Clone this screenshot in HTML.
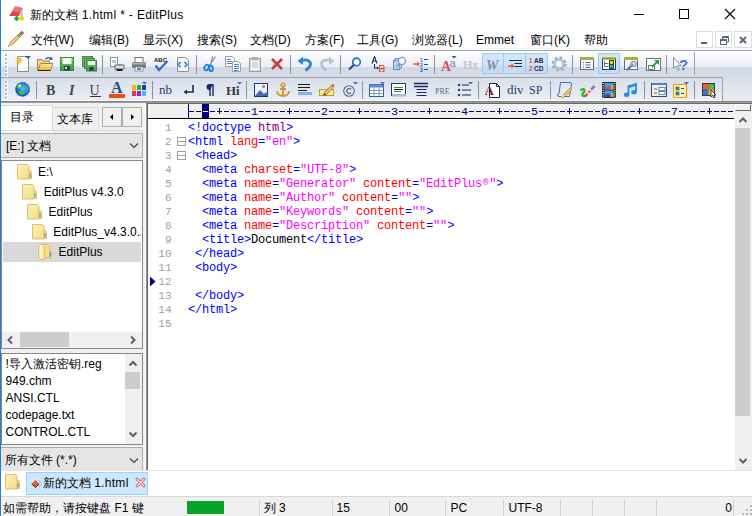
<!DOCTYPE html><html><head><meta charset="utf-8"><style>
*{margin:0;padding:0;box-sizing:border-box}
html,body{width:752px;height:516px;overflow:hidden;background:#fff}
body{position:relative;font-family:"Liberation Sans",sans-serif;font-size:12px;color:#000}
.t{position:absolute;white-space:nowrap;line-height:14px}
.b{position:absolute}
.code{position:absolute;font-family:"Liberation Mono",monospace;font-size:12px;letter-spacing:-0.2px;line-height:14px;white-space:pre;color:#0000ff}
.ln{position:absolute;font-family:"Liberation Mono",monospace;font-size:11px;letter-spacing:0.3px;line-height:14px;white-space:pre;color:#a0a0a0;text-align:right;width:40px}
.tg{color:#0000ff}.at{color:#ff0000}.av{color:#ff00ff}.dt{color:#800080}.tx{color:#000}
</style></head><body>
<div class="b" style="left:0;top:0;width:1px;height:516px;background:#1f7fd8;z-index:50"></div>
<svg style="position:absolute;left:4px;top:2px" width="24" height="24" viewBox="0 0 24 24"><path d="M5.1 14 L11.2 4.2 L18.6 6 L14.9 14 Z" fill="#e04848"/><path d="M11.2 4.2 L18.6 6 L16 10.5 L9 9Z" fill="#f08a88" opacity="0.7"/><path d="M18.6 6 L19.2 15 L14.9 14 Z" fill="#b8d0e6"/>
<path d="M10.2 16.5h4.8M12.6 14.1v4.8" stroke="#28a828" stroke-width="2.2"/><path d="M15.3 16.3h4.8M17.7 13.9v4.8" stroke="#f0d020" stroke-width="2.2"/></svg>
<div class="t " style="left:30px;top:8px;">新的文档<span style="letter-spacing:0.35px"> 1.html * - EditPlus</span></div>
<div class="b" style="left:634px;top:14px;width:10px;height:1px;background:#000"></div>
<div class="b" style="left:679px;top:9px;width:10px;height:10px;border:1px solid #000"></div>
<svg style="position:absolute;left:724px;top:8px" width="12" height="12" viewBox="0 0 12 12"><path d="M1 1L11 11M11 1L1 11" stroke="#000" stroke-width="1.1"/></svg>
<svg style="position:absolute;left:2px;top:28px" width="28" height="22" viewBox="0 0 28 22"><path d="M8 16.8L17.6 7.2" stroke="#a07a30" stroke-width="3.4"/><path d="M8 16.8L17.6 7.2" stroke="#f6dc70" stroke-width="2"/><path d="M6.3 18.5L7.3 15.3L9.5 17.5Z" fill="#f0c896"/><path d="M6.3 18.5l0.45-1.5l1.05 1.05z" fill="#222"/><path d="M16.6 8.2L18.8 6" stroke="#2a8a3a" stroke-width="3.2"/><path d="M17.4 7.4L18 6.8" stroke="#e8f0e8" stroke-width="3"/><path d="M18.8 6L21 3.8" stroke="#d84a4a" stroke-width="3.2"/></svg>
<div class="t " style="left:30.6px;top:33px;">文件(W)</div>
<div class="t " style="left:89px;top:33px;">编辑(B)</div>
<div class="t " style="left:143px;top:33px;">显示(X)</div>
<div class="t " style="left:197px;top:33px;">搜索(S)</div>
<div class="t " style="left:250px;top:33px;">文档(D)</div>
<div class="t " style="left:305px;top:33px;">方案(F)</div>
<div class="t " style="left:357px;top:33px;">工具(G)</div>
<div class="t " style="left:412px;top:33px;">浏览器(L)</div>
<div class="t " style="left:476px;top:33px;">Emmet</div>
<div class="t " style="left:530px;top:33px;">窗口(K)</div>
<div class="t " style="left:584px;top:33px;">帮助</div>
<div class="b" style="left:696px;top:31px;width:17px;height:17px;border:1px solid #dcdcdc;background:#fff"></div>
<div class="b" style="left:715px;top:31px;width:17px;height:17px;border:1px solid #dcdcdc;background:#fff"></div>
<div class="b" style="left:734px;top:31px;width:18px;height:17px;border:1px solid #dcdcdc;background:#fff"></div>
<div class="b" style="left:701px;top:42px;width:6px;height:2px;background:#5a6478"></div>
<svg style="position:absolute;left:718px;top:34px" width="12" height="12" viewBox="0 0 12 12"><rect x="2.5" y="5.5" width="6" height="5" fill="none" stroke="#5a6478"/><path d="M2 6.5h7" stroke="#5a6478"/><path d="M4.5 5V2.5H10.5V8H9" fill="none" stroke="#5a6478"/><path d="M4.5 3.5h6" stroke="#5a6478"/></svg>
<svg style="position:absolute;left:737px;top:34px" width="12" height="12" viewBox="0 0 12 12"><path d="M3 3L9 9M9 3L3 9" stroke="#5a6478" stroke-width="1.8"/></svg>
<div class="b" style="left:0;top:48px;width:752px;height:1px;background:#f0f0f0"></div>
<div class="b" style="left:0;top:50px;width:752px;height:1px;background:#a0a0a0"></div>
<div class="b" style="left:0;top:51px;width:752px;height:50px;background:linear-gradient(#fdfdfe 0%,#e9edf5 31.6%,#cfd8e7 32%,#e8ecf4 100%)"></div>
<div class="b" style="left:0;top:51px;width:722px;height:26px;background:linear-gradient(#fdfdfe 0%,#eaeef5 61%,#d0d8e6 61.6%,#dae0ec 100%)"></div>
<div class="b" style="left:0;top:77px;width:722px;height:1px;background:#a0a0a0"></div>
<div class="b" style="left:0;top:78px;width:722px;height:23px;background:linear-gradient(#d8dfea 0%,#ebeef5 100%)"></div>
<div class="b" style="left:722px;top:77px;width:1px;height:24px;background:#a0a0a0"></div>
<div class="b" style="left:0;top:100px;width:722px;height:1px;background:#fafbfd"></div>
<div class="b" style="left:0;top:101px;width:752px;height:2px;background:linear-gradient(#7a7a7a,#a5a5a5)"></div>
<div class="b" style="left:694px;top:52px;width:1px;height:23px;background:#a0a0a0"></div>
<div class="b" style="left:5px;top:54px;width:2px;height:2px;background:#b4bac4;border-right:1px solid #fff;border-bottom:1px solid #fff;width:3px;height:3px"></div>
<div class="b" style="left:5px;top:58px;width:2px;height:2px;background:#b4bac4;border-right:1px solid #fff;border-bottom:1px solid #fff;width:3px;height:3px"></div>
<div class="b" style="left:5px;top:62px;width:2px;height:2px;background:#b4bac4;border-right:1px solid #fff;border-bottom:1px solid #fff;width:3px;height:3px"></div>
<div class="b" style="left:5px;top:66px;width:2px;height:2px;background:#b4bac4;border-right:1px solid #fff;border-bottom:1px solid #fff;width:3px;height:3px"></div>
<div class="b" style="left:5px;top:70px;width:2px;height:2px;background:#b4bac4;border-right:1px solid #fff;border-bottom:1px solid #fff;width:3px;height:3px"></div>
<div class="b" style="left:5px;top:74px;width:2px;height:2px;background:#b4bac4;border-right:1px solid #fff;border-bottom:1px solid #fff;width:3px;height:3px"></div>
<div class="b" style="left:5px;top:81px;width:2px;height:2px;background:#b4bac4;border-right:1px solid #fff;border-bottom:1px solid #fff;width:3px;height:3px"></div>
<div class="b" style="left:5px;top:85px;width:2px;height:2px;background:#b4bac4;border-right:1px solid #fff;border-bottom:1px solid #fff;width:3px;height:3px"></div>
<div class="b" style="left:5px;top:89px;width:2px;height:2px;background:#b4bac4;border-right:1px solid #fff;border-bottom:1px solid #fff;width:3px;height:3px"></div>
<div class="b" style="left:5px;top:93px;width:2px;height:2px;background:#b4bac4;border-right:1px solid #fff;border-bottom:1px solid #fff;width:3px;height:3px"></div>
<div class="b" style="left:5px;top:97px;width:2px;height:2px;background:#b4bac4;border-right:1px solid #fff;border-bottom:1px solid #fff;width:3px;height:3px"></div>
<div class="b" style="left:102px;top:55px;width:1px;height:19px;background:#8e9299"></div>
<div class="b" style="left:196px;top:55px;width:1px;height:19px;background:#8e9299"></div>
<div class="b" style="left:290px;top:55px;width:1px;height:19px;background:#8e9299"></div>
<div class="b" style="left:340px;top:55px;width:1px;height:19px;background:#8e9299"></div>
<div class="b" style="left:434px;top:55px;width:1px;height:19px;background:#8e9299"></div>
<div class="b" style="left:572px;top:55px;width:1px;height:19px;background:#8e9299"></div>
<div class="b" style="left:666px;top:55px;width:1px;height:19px;background:#8e9299"></div>
<div class="b" style="left:36px;top:81px;width:1px;height:18px;background:#8e9299"></div>
<div class="b" style="left:152px;top:81px;width:1px;height:18px;background:#8e9299"></div>
<div class="b" style="left:246px;top:81px;width:1px;height:18px;background:#8e9299"></div>
<div class="b" style="left:362px;top:81px;width:1px;height:18px;background:#8e9299"></div>
<div class="b" style="left:478px;top:81px;width:1px;height:18px;background:#8e9299"></div>
<div class="b" style="left:550px;top:81px;width:1px;height:18px;background:#8e9299"></div>
<div class="b" style="left:644px;top:81px;width:1px;height:18px;background:#8e9299"></div>
<div class="b" style="left:694px;top:81px;width:1px;height:18px;background:#8e9299"></div>
<div class="b" style="left:482px;top:53px;width:66px;height:21px;background:linear-gradient(#d3e7f9 0%,#cfe3f8 60%,#c3daf2 61%,#c6dcf3 100%);border:1px solid #9ccaf2"></div>
<div class="b" style="left:503px;top:53px;width:1px;height:21px;background:#9ccaf2"></div>
<div class="b" style="left:525px;top:53px;width:1px;height:21px;background:#9ccaf2"></div>
<div class="b" style="left:598px;top:53px;width:22px;height:21px;background:linear-gradient(#d3e7f9 0%,#cfe3f8 60%,#c3daf2 61%,#c6dcf3 100%);border:1px solid #9ccaf2"></div>
<svg style="position:absolute;left:15px;top:56px" width="16" height="16" viewBox="0 0 16 16"><path d="M2.5 0.5h9l2 2v13h-11z" fill="#fbfbf8" stroke="#8a8a8a"/><circle cx="4" cy="4.5" r="2.4" fill="#f7a010"/><path d="M4 0.5v8M0 4.5h8M1.3 1.8l5.4 5.4M6.7 1.8l-5.4 5.4" stroke="#f9c850" stroke-width="0.9"/><path d="M10 0h6l-3 3z" fill="#3a5a90"/></svg>
<svg style="position:absolute;left:37px;top:56px" width="16" height="16" viewBox="0 0 16 16"><defs><linearGradient id="of" x1="0" y1="0" x2="0" y2="1"><stop offset="0" stop-color="#fdf0a0"/><stop offset="1" stop-color="#e8b030"/></linearGradient></defs><path d="M0.5 3.5h4.5l1 1.5h6.5v9.5H0.5z" fill="#f4d878" stroke="#8a7040" stroke-width="0.8"/><path d="M1 14.5L3.5 7.5h12.5l-2.5 7z" fill="url(#of)" stroke="#8a7040" stroke-width="0.8"/><path d="M1 14.5h12.5" stroke="#302010" stroke-width="1"/><path d="M8.5 3.5C10 1 13 1 14 3.5" fill="none" stroke="#2a5aa0" stroke-width="1.3"/><path d="M12 4l4-0.5l-2-3z" fill="#2a5aa0"/></svg>
<svg style="position:absolute;left:59px;top:56px" width="16" height="16" viewBox="0 0 16 16"><defs><linearGradient id="sv" x1="0" y1="0" x2="0" y2="1"><stop offset="0" stop-color="#7ac87a"/><stop offset="1" stop-color="#3c9a3c"/></linearGradient></defs><rect x="1.5" y="1.5" width="13" height="13" fill="url(#sv)" stroke="#3a8a3a"/><rect x="3.5" y="2" width="9" height="6" fill="#f0f8f0"/><rect x="5" y="10" width="6" height="4.5" fill="#2a3a50"/><rect x="6" y="11" width="2" height="2" fill="#e0e0e0"/></svg>
<svg style="position:absolute;left:81px;top:56px" width="16" height="16" viewBox="0 0 16 16"><rect x="1.5" y="0.5" width="10" height="10" fill="#6ab86a" stroke="#3a8a3a"/><rect x="3.5" y="2.5" width="10" height="10" fill="#6ab86a" stroke="#3a8a3a"/><rect x="5.5" y="4.5" width="10" height="10.5" fill="url(#sv)" stroke="#3a8a3a"/><rect x="7" y="5" width="7" height="4" fill="#f0f8f0"/><rect x="8.5" y="11" width="4" height="3.5" fill="#2a3a50"/></svg>
<svg style="position:absolute;left:109px;top:56px" width="16" height="16" viewBox="0 0 16 16"><rect x="1.5" y="1.5" width="7" height="9" fill="#fff" stroke="#909090"/><rect x="3" y="4" width="4" height="3" fill="#a8c8e8"/><rect x="6" y="9" width="9" height="4" fill="#e0e0e0" stroke="#505050" stroke-width="0.8"/><rect x="7.5" y="13" width="6" height="2" fill="#202020"/><rect x="8" y="8" width="5" height="1.5" fill="#909090"/></svg>
<svg style="position:absolute;left:131px;top:56px" width="16" height="16" viewBox="0 0 16 16"><rect x="4" y="1.5" width="8" height="5" fill="#fff" stroke="#707070"/><rect x="1" y="6" width="14" height="6" rx="1" fill="#7a7a7a"/><rect x="1.5" y="6.5" width="13" height="2" fill="#b0b0b0"/><rect x="4" y="11" width="8" height="4" fill="#fff" stroke="#707070" stroke-width="0.7"/><rect x="6" y="12" width="4" height="2" fill="#3a8ad0"/><circle cx="13" cy="8" r="0.8" fill="#40c040"/></svg>
<svg style="position:absolute;left:153px;top:56px" width="16" height="16" viewBox="0 0 16 16"><text x="1" y="6" font-family="Liberation Sans" font-size="6" font-weight="bold" fill="#222">ABC</text><path d="M2.5 9.5l3.5 4.5l8.5-9" fill="none" stroke="#3a6ad0" stroke-width="2.4"/></svg>
<svg style="position:absolute;left:175px;top:56px" width="16" height="16" viewBox="0 0 16 16"><path d="M2.5 1.5h8l3 3v11h-11z" fill="#f6f6f6" stroke="#909090"/><path d="M5.5 6l-2.5 2.5l2.5 2.5M9.5 6l2.5 2.5l-2.5 2.5" fill="none" stroke="#4a90e0" stroke-width="1.8"/></svg>
<svg style="position:absolute;left:202px;top:56px" width="16" height="16" viewBox="0 0 16 16"><path d="M7.5 9.5L13.5 0.5M8.5 9.5L10.5 0.5" stroke="#7a8290" stroke-width="1.1"/><ellipse cx="4.5" cy="11.5" rx="2" ry="3" transform="rotate(25 4.5 11.5)" fill="none" stroke="#1a7ae0" stroke-width="1.8"/><ellipse cx="9" cy="12.5" rx="1.8" ry="2.8" transform="rotate(-5 9 12.5)" fill="none" stroke="#1a7ae0" stroke-width="1.8"/></svg>
<svg style="position:absolute;left:225px;top:56px" width="16" height="16" viewBox="0 0 16 16"><path d="M0.5 0.5h7l2 2v8h-9z" fill="#fafafa" stroke="#a0a0a0"/><path d="M7.5 5.5h6l2 2v8h-8z" fill="#fafafa" stroke="#a0a0a0"/><path d="M2 3.5h4M2 5.5h5M2 7.5h5M9 8.5h5M9 10.5h5M9 12.5h5M9 14.5h4" stroke="#4a82c8" stroke-width="1"/></svg>
<svg style="position:absolute;left:247px;top:56px" width="16" height="16" viewBox="0 0 16 16"><rect x="2.5" y="2.5" width="11" height="13" fill="#dcdcdc" stroke="#9a9a9a"/><rect x="5" y="1" width="6" height="3" fill="#b0b0b0"/><rect x="4" y="5" width="8" height="9" fill="#f2f2f2"/><path d="M5 7h6M5 9h6M5 11h6" stroke="#c0c0c0"/></svg>
<svg style="position:absolute;left:269px;top:56px" width="16" height="16" viewBox="0 0 16 16"><path d="M3 3L13 13M13 3L3 13" stroke="#d23a3a" stroke-width="2.6"/></svg>
<svg style="position:absolute;left:297px;top:56px" width="16" height="16" viewBox="0 0 16 16"><path d="M4.5 4.5C9 3 14 4.5 13.5 8.5C13 11.5 10.5 13 8.5 14.5" fill="none" stroke="#2a86d8" stroke-width="2.8"/><path d="M0.5 5L6 0.5V9z" fill="#2a86d8"/></svg>
<svg style="position:absolute;left:319px;top:56px" width="16" height="16" viewBox="0 0 16 16"><path d="M11.5 4.5C7 3 2 4.5 2.5 8.5C3 11.5 5.5 13 7.5 14.5" fill="none" stroke="#b4c4d2" stroke-width="2.8"/><path d="M15.5 5L10 0.5V9z" fill="#b4c4d2"/></svg>
<svg style="position:absolute;left:347px;top:56px" width="16" height="16" viewBox="0 0 16 16"><circle cx="9.5" cy="6" r="3.8" fill="#fff" stroke="#2a72c8" stroke-width="1.7"/><path d="M7 8.8L2 13.5" stroke="#1a4a90" stroke-width="2.2"/></svg>
<svg style="position:absolute;left:369px;top:56px" width="16" height="16" viewBox="0 0 16 16"><path d="M3 7.5L5.5 0.5L8 7.5M3.8 5h3.4" fill="none" stroke="#1a2a60" stroke-width="1.1"/><path d="M5.5 8v4h3" fill="none" stroke="#1a2a60" stroke-width="1.1"/><path d="M8 10.5l2 1.5l-2 1.5z" fill="#1a2a60"/><path d="M10.5 9.5h3a1.6 1.6 0 0 1 0 3.2h-3zM10.5 12.7h3.3a1.7 1.7 0 0 1 0 3.3h-3.3zM10.5 9.5v6.5" fill="none" stroke="#f05020" stroke-width="1.2"/></svg>
<svg style="position:absolute;left:391px;top:56px" width="16" height="16" viewBox="0 0 16 16"><path d="M2.5 4.5l2-2h6v9l-2 2h-6z" fill="#b8d4f0" stroke="#5a88c0"/><path d="M2.5 4.5h6v9M8.5 4.5l2-2" fill="none" stroke="#5a88c0" stroke-width="0.8"/><circle cx="11" cy="5" r="3.6" fill="#eef6ff" stroke="#8a9cb0" stroke-width="1.3"/><path d="M8.5 7.5L5 11" stroke="#8a9cb0" stroke-width="1.6"/></svg>
<svg style="position:absolute;left:413px;top:56px" width="16" height="16" viewBox="0 0 16 16"><path d="M0 8h5" stroke="#f05a20" stroke-width="1.5"/><path d="M4 5.5l3 2.5l-3 2.5z" fill="#f05a20"/><text x="7" y="5.5" font-family="Liberation Sans" font-size="5" font-weight="bold" fill="#2a5ac0">1</text><text x="7" y="10.5" font-family="Liberation Sans" font-size="5" font-weight="bold" fill="#2a5ac0">2</text><text x="7" y="15.5" font-family="Liberation Sans" font-size="5" font-weight="bold" fill="#2a5ac0">3</text><path d="M11 3.5h4M11 8.5h4M11 13.5h4" stroke="#2a4a80" stroke-width="1.2"/></svg>
<svg style="position:absolute;left:441px;top:56px" width="16" height="16" viewBox="0 0 16 16"><text x="0" y="15" font-family="Liberation Serif" font-size="14" font-weight="bold" fill="#d85050">A</text><text x="8.5" y="11" font-family="Liberation Sans" font-size="11" fill="#7a78d0">a</text><path d="M10.5 0h5l-2.5 2.5z" fill="#3a5a8a"/></svg>
<svg style="position:absolute;left:463px;top:56px" width="16" height="16" viewBox="0 0 16 16"><text x="0" y="13" font-family="Liberation Serif" font-size="12" font-weight="bold" fill="#c0c4cc">Hx</text></svg>
<svg style="position:absolute;left:485px;top:56px" width="16" height="16" viewBox="0 0 16 16"><text x="1" y="14" font-family="Liberation Serif" font-size="14" font-style="italic" font-weight="bold" fill="#8090a8">W</text></svg>
<svg style="position:absolute;left:507px;top:56px" width="16" height="16" viewBox="0 0 16 16"><path d="M2 4.5h13M7.5 7.5h7.5M7.5 10.5h7.5" stroke="#1a2a50" stroke-width="1.2"/><path d="M1 10h4" stroke="#f05020" stroke-width="1.5"/><path d="M4.5 7.5l3 2.5l-3 2.5z" fill="#f05020"/></svg>
<svg style="position:absolute;left:529px;top:56px" width="16" height="16" viewBox="0 0 16 16"><text x="0" y="7" font-family="Liberation Sans" font-size="6.5" font-weight="bold" fill="#f05020">1</text><text x="0" y="15" font-family="Liberation Sans" font-size="6.5" font-weight="bold" fill="#f05020">2</text><text x="5" y="7" font-family="Liberation Sans" font-size="6.5" font-weight="bold" fill="#1a2a50">AB</text><text x="5" y="15" font-family="Liberation Sans" font-size="6.5" font-weight="bold" fill="#1a2a50">CD</text></svg>
<svg style="position:absolute;left:551px;top:56px" width="16" height="16" viewBox="0 0 16 16"><circle cx="8" cy="8" r="6" fill="none" stroke="#98acc2" stroke-width="3" stroke-dasharray="2.4 2.3"/><circle cx="8" cy="8" r="4.6" fill="none" stroke="#a8bcd0" stroke-width="2.4"/><circle cx="8" cy="8" r="2.2" fill="#f4f6fa"/></svg>
<svg style="position:absolute;left:579px;top:56px" width="16" height="16" viewBox="0 0 16 16"><rect x="1.5" y="1.5" width="13" height="12" fill="#f4f6fa" stroke="#5a6a88"/><rect x="1" y="1" width="14" height="3" fill="#a8b040"/><path d="M4 6.5h1M4 9h1M4 11.5h1" stroke="#e05020" stroke-width="1.2"/><path d="M6.5 6.5h5M6.5 9h5M6.5 11.5h5" stroke="#5a6a88"/></svg>
<svg style="position:absolute;left:601px;top:56px" width="16" height="16" viewBox="0 0 16 16"><defs><linearGradient id="ol" x1="0" y1="0" x2="0" y2="1"><stop offset="0" stop-color="#c8d040"/><stop offset="1" stop-color="#707818"/></linearGradient></defs><rect x="1.5" y="1.5" width="13" height="12" fill="#fafafa" stroke="#2a3a58"/><rect x="1" y="1" width="14" height="2.5" fill="url(#ol)"/><path d="M3.5 5v5.5h4M3.5 7.5h4" fill="none" stroke="#707070"/><rect x="8" y="4" width="5" height="9" fill="#2a3a58"/><rect x="9" y="5" width="3" height="3" fill="#f0d010"/><rect x="9" y="9" width="3" height="3" fill="#30c040"/></svg>
<svg style="position:absolute;left:623px;top:56px" width="16" height="16" viewBox="0 0 16 16"><rect x="1.5" y="1.5" width="13" height="12" fill="#f4f6fa" stroke="#5a6a88"/><rect x="1" y="1" width="14" height="3" fill="#a8b040"/><path d="M4 14L10 8" stroke="#5a88c8" stroke-width="2.5"/><circle cx="10.5" cy="8" r="2.5" fill="none" stroke="#9aa0b0" stroke-width="1.5"/></svg>
<svg style="position:absolute;left:645px;top:56px" width="16" height="16" viewBox="0 0 16 16"><rect x="1.5" y="2.5" width="14" height="12" fill="#fbfbfb" stroke="#707070"/><path d="M3.5 9.5h6v4h-6z" fill="none" stroke="#707070"/><path d="M7 11l6-6" stroke="#20a040" stroke-width="1.8"/><path d="M9 4h5v5z" fill="#20a040"/></svg>
<svg style="position:absolute;left:672px;top:56px" width="16" height="16" viewBox="0 0 16 16"><path d="M1.5 1.5v11l2.5-2.5l2 4.5l1.5-.7l-2-4.3h3.5z" fill="#f8f8f8" stroke="#8a96a8"/><text x="7" y="13.5" font-family="Liberation Sans" font-size="15" font-weight="bold" fill="#4a78d0">?</text></svg>
<svg style="position:absolute;left:15px;top:82px" width="16" height="16" viewBox="0 0 16 16"><defs><radialGradient id="gg" cx="0.55" cy="0.45" r="0.6"><stop offset="0" stop-color="#4ac4f8"/><stop offset="0.6" stop-color="#2a78e0"/><stop offset="1" stop-color="#1838b0"/></radialGradient></defs><circle cx="7.6" cy="7.4" r="7.3" fill="url(#gg)"/><path d="M1.5 5.5C2 3 4 1.5 6.5 1.8C7 3.5 6 5.5 4 6.5C3 6.8 2 6.5 1.5 5.5z" fill="#30c838"/><path d="M10.8 3.2C12.5 4 13.5 6 13 8.5C11.5 8.5 10.5 7 10.8 3.2z" fill="#30c838"/><path d="M3.5 10C5 8.8 8 9 9.5 10.5C9.5 12 8 13 6.5 13C5 12.5 3.8 11.5 3.5 10z" fill="#30c838"/><circle cx="4.8" cy="4" r="1.3" fill="#f0fff0" opacity="0.9"/></svg>
<svg style="position:absolute;left:44px;top:82px" width="16" height="16" viewBox="0 0 16 16"><text x="2" y="13" font-family="Liberation Serif" font-size="14" font-weight="bold" fill="#444">B</text></svg>
<svg style="position:absolute;left:66px;top:82px" width="16" height="16" viewBox="0 0 16 16"><text x="3" y="13" font-family="Liberation Serif" font-size="14" font-style="italic" font-weight="bold" fill="#444">I</text></svg>
<svg style="position:absolute;left:88px;top:82px" width="16" height="16" viewBox="0 0 16 16"><text x="1.5" y="12.5" font-family="Liberation Serif" font-size="14" fill="#444">U</text><path d="M2 14.5h11" stroke="#333"/></svg>
<svg style="position:absolute;left:109px;top:82px" width="16" height="16" viewBox="0 0 16 16"><text x="2" y="11.3" font-family="Liberation Serif" font-size="16" font-weight="bold" fill="#2a4a90">A</text><rect x="0" y="12" width="16" height="4" fill="#f04a10"/></svg>
<svg style="position:absolute;left:131px;top:82px" width="16" height="16" viewBox="0 0 16 16"><rect x="1" y="3" width="4" height="5" fill="#f8b010"/><rect x="6" y="3" width="4" height="5" fill="#30b030"/><rect x="11" y="3" width="4" height="5" fill="#3030c0"/><rect x="1" y="9" width="4" height="5" fill="#f03050"/><rect x="6" y="9" width="4" height="5" fill="#a020c0"/><rect x="11" y="9" width="4" height="5" fill="#40c0f0"/><path d="M11 0h5l-2.5 2.5z" fill="#4a6a9a"/></svg>
<svg style="position:absolute;left:159px;top:82px" width="16" height="16" viewBox="0 0 16 16"><text x="0" y="12" font-family="Liberation Serif" font-size="13" fill="#2a3a70">nb</text></svg>
<svg style="position:absolute;left:181px;top:82px" width="16" height="16" viewBox="0 0 16 16"><path d="M12 3v7H4" fill="none" stroke="#1a2a60" stroke-width="1.6"/><path d="M6 7.5l-3.5 2.5l3.5 2.5z" fill="#1a2a60"/></svg>
<svg style="position:absolute;left:203px;top:82px" width="16" height="16" viewBox="0 0 16 16"><path d="M7 2v12M10 2v12" stroke="#1a2a60" stroke-width="1.4"/><path d="M10 2H6.5a3 3 0 0 0 0 6H7" fill="#1a2a60"/></svg>
<svg style="position:absolute;left:226px;top:82px" width="16" height="16" viewBox="0 0 16 16"><text x="0" y="13" font-family="Liberation Serif" font-size="13" font-weight="bold" fill="#3a3a3a">Hi</text><path d="M11 0h5l-2.5 2.5z" fill="#4a6a9a"/></svg>
<svg style="position:absolute;left:253px;top:82px" width="16" height="16" viewBox="0 0 16 16"><rect x="1.5" y="1.5" width="13" height="13" fill="#eaf2fb" stroke="#1a3a80"/><path d="M2 14l5-6l4 4l2-2l1.5 2v2z" fill="#4a6ab0"/><circle cx="10.5" cy="4.5" r="1.6" fill="#f07040"/></svg>
<svg style="position:absolute;left:275px;top:82px" width="16" height="16" viewBox="0 0 16 16"><circle cx="8" cy="3" r="1.8" fill="none" stroke="#d89030" stroke-width="1.5"/><path d="M8 5v9M5 7h6M2 9c0 4 4 5 6 5s6-1 6-5" fill="none" stroke="#d89030" stroke-width="1.8"/></svg>
<svg style="position:absolute;left:297px;top:82px" width="16" height="16" viewBox="0 0 16 16"><path d="M1 2.5h12M1 5.5h12M1 8.5h9" stroke="#1a1a1a" stroke-width="1"/><rect x="1" y="10" width="14" height="3" fill="#80b4ec"/></svg>
<svg style="position:absolute;left:319px;top:82px" width="16" height="16" viewBox="0 0 16 16"><rect x="0.5" y="7.5" width="14" height="6" fill="#f8e89a" stroke="#c0a020"/><path d="M5 11L12.5 3l2 2L7 13z" fill="#f0c050" stroke="#505050" stroke-width="0.6"/><path d="M12.5 3l2 2l1.3-1.3l-2-2z" fill="#e05050"/><path d="M5 11l-0.8 2.6l2.8-0.6z" fill="#333"/></svg>
<svg style="position:absolute;left:342px;top:82px" width="16" height="16" viewBox="0 0 16 16"><circle cx="7" cy="9" r="5.3" fill="none" stroke="#5a6a90" stroke-width="1.1"/><path d="M9 7.2a2.5 2.5 0 1 0 0 3.6" fill="none" stroke="#5a6a90" stroke-width="1.2"/><path d="M11 0h5l-2.5 2.5z" fill="#4a6a9a"/></svg>
<svg style="position:absolute;left:369px;top:82px" width="16" height="16" viewBox="0 0 16 16"><rect x="0.5" y="2.5" width="14" height="12" fill="#fff" stroke="#3a5a90"/><rect x="0.5" y="2.5" width="14" height="3" fill="#5a8ae0"/><path d="M0.5 8.5h14M0.5 11.5h14M5 5.5v9M10 5.5v9" stroke="#7a9ac8"/><path d="M11 0h5l-2.5 2.5z" fill="#4a6a9a"/></svg>
<svg style="position:absolute;left:391px;top:82px" width="16" height="16" viewBox="0 0 16 16"><rect x="0.5" y="1.5" width="14" height="12" fill="#fff" stroke="#2a3a58"/><rect x="1" y="12" width="14" height="2.5" fill="#a8bcd8"/><path d="M3 5.5h9M3 9.5h7" stroke="#20a030" stroke-width="1"/><path d="M3 7.5h9" stroke="#1a1a1a" stroke-width="1"/></svg>
<svg style="position:absolute;left:413px;top:82px" width="16" height="16" viewBox="0 0 16 16"><path d="M1 1.5h14M1 4.5h14" stroke="#1a2a60" stroke-width="1.3"/><path d="M3.5 7.5h10M3.5 10.5h10M3.5 13.5h10" stroke="#1a2a60" stroke-width="1.2"/></svg>
<svg style="position:absolute;left:435px;top:82px" width="16" height="16" viewBox="0 0 16 16"><text x="0" y="12" font-family="Liberation Serif" font-size="8" fill="#5a6a90">PRE</text></svg>
<svg style="position:absolute;left:457px;top:82px" width="16" height="16" viewBox="0 0 16 16"><circle cx="2" cy="3" r="1.3" fill="#2a4a90"/><circle cx="2" cy="8" r="1.3" fill="#2a4a90"/><circle cx="2" cy="13" r="1.3" fill="#2a4a90"/><path d="M5 3h7M5 8h9M5 13h9" stroke="#1a2a50" stroke-width="1.2"/><path d="M11 0h5l-2.5 2.5z" fill="#4a6a9a"/></svg>
<svg style="position:absolute;left:485px;top:82px" width="16" height="16" viewBox="0 0 16 16"><path d="M4.5 1.5h7l3 3v11h-10z" fill="#fff" stroke="#1a2a50"/><path d="M11.5 1.5v3h3" fill="none" stroke="#1a2a50"/><text x="-0.5" y="12.5" font-family="Liberation Serif" font-size="13" font-weight="bold" fill="#9a1010">A</text></svg>
<svg style="position:absolute;left:507px;top:82px" width="16" height="16" viewBox="0 0 16 16"><text x="0" y="12" font-family="Liberation Serif" font-size="13" fill="#2a3a70">div</text></svg>
<svg style="position:absolute;left:529px;top:82px" width="16" height="16" viewBox="0 0 16 16"><text x="0" y="12" font-family="Liberation Serif" font-size="12" fill="#2a3a70">SP</text></svg>
<svg style="position:absolute;left:557px;top:82px" width="16" height="16" viewBox="0 0 16 16"><path d="M3.5 0.5h9.5q1.5 0 1.5 1.5l-2 12.5h-10.5q-1.5 0-1.5-1.5q0-1.5 1.5-1.5z" fill="#dceafa" stroke="#3a5a98" stroke-width="0.9"/><path d="M4 15L13 6l2 2l-9 8z" fill="#f4c850" stroke="#b08020" stroke-width="0.7"/><path d="M4 15l1.2-3l1.8 1.8z" fill="#f8e0b0"/></svg>
<svg style="position:absolute;left:579px;top:82px" width="16" height="16" viewBox="0 0 16 16"><path d="M1.5 8.5C3 6.5 6 7 5.5 9C5 11 2.5 11.5 3.5 13.5C4.5 14.5 6.5 14 7 13" fill="none" stroke="#28b828" stroke-width="2.3"/><path d="M6 14.5L15.5 4" stroke="#d84848" stroke-width="2.2"/><path d="M8.5 11.5l1-1.1M11 8.7l1-1.1" stroke="#fff" stroke-width="2.2"/><path d="M13 6.8L15.5 4" stroke="#6a7ad8" stroke-width="2.2"/></svg>
<svg style="position:absolute;left:601px;top:82px" width="16" height="16" viewBox="0 0 16 16"><rect x="1" y="0" width="14" height="16" fill="#2a2a2a"/><rect x="3.5" y="1" width="9" height="6.5" fill="#3aa0e8"/><rect x="3.5" y="8.5" width="9" height="6.5" fill="#3aa0e8"/><path d="M3.5 7.5v-3l3 1l3-2v4z" fill="#e04040"/><rect x="10" y="3" width="2.5" height="4.5" fill="#f0a020"/><path d="M3.5 15v-2l3-1.5l3 1.5v2z" fill="#3050c0"/><rect x="10" y="11" width="2.5" height="4" fill="#f0a020"/><path d="M2.2 1v15M13.8 1v15" stroke="#fff" stroke-width="1.1" stroke-dasharray="1 1.3"/></svg>
<svg style="position:absolute;left:623px;top:82px" width="16" height="16" viewBox="0 0 16 16"><path d="M5.5 3.5v9M13 1v9" stroke="#2a8ae8" stroke-width="1.8"/><path d="M5 3.5L13.5 1v2.8L5 6.3z" fill="#2a8ae8"/><ellipse cx="3.6" cy="12.8" rx="2.8" ry="2.2" fill="#2a8ae8"/><ellipse cx="11" cy="10.3" rx="2.8" ry="2.2" fill="#2a8ae8"/></svg>
<svg style="position:absolute;left:651px;top:82px" width="16" height="16" viewBox="0 0 16 16"><rect x="0.5" y="1.5" width="15" height="13" fill="#f4f0d8" stroke="#3a4a68"/><rect x="1" y="1" width="15" height="2" fill="#4a80d0"/><path d="M3 7h3M3 11h3" stroke="#5a6a90" stroke-width="1.2"/><rect x="8" y="5.5" width="6" height="3" fill="#fff" stroke="#5a8ac0"/><rect x="8" y="9.5" width="6" height="3" fill="#fff" stroke="#5a8ac0"/></svg>
<svg style="position:absolute;left:673px;top:82px" width="16" height="16" viewBox="0 0 16 16"><rect x="0.5" y="2.5" width="13" height="13" fill="#fcf4c0" stroke="#e8a010" stroke-width="1.2"/><rect x="3" y="5" width="3" height="3" fill="#40a040" stroke="#2a4a80" stroke-width="0.6"/><rect x="3" y="10" width="3" height="3" fill="#40a040" stroke="#2a4a80" stroke-width="0.6"/><path d="M8 6.5h3M8 11.5h3" stroke="#2a4a80"/><path d="M11 0h5l-2.5 2.5z" fill="#4a6a9a"/></svg>
<svg style="position:absolute;left:702px;top:82px" width="16" height="16" viewBox="0 0 16 16"><rect x="0" y="1" width="13" height="13" fill="#3a3a40"/><rect x="1" y="2" width="5.5" height="5.5" fill="#f05a30"/><rect x="6.5" y="2" width="5.5" height="5.5" fill="#50b850"/><rect x="1" y="7.5" width="5.5" height="5.5" fill="#3a70d0"/><rect x="6.5" y="7.5" width="5.5" height="5.5" fill="#f8c020"/><path d="M9 8v7l1.6-1.6l1.2 2.6l1.2-.6l-1.2-2.5h2.2z" fill="#fff" stroke="#000" stroke-width="0.7"/></svg>
<div class="b" style="left:1px;top:103px;width:146px;height:367px;background:#f0f0f0"></div>
<div class="b" style="left:52px;top:107px;width:47px;height:24px;background:#f0f0f0;border:1px solid #d9d9d9;border-bottom:none"></div>
<div class="b" style="left:1px;top:105px;width:52px;height:26px;background:#fff;border:1px solid #d9d9d9;border-left:none;border-bottom:none"></div>
<div class="b" style="left:1px;top:130px;width:141px;height:1px;background:#d9d9d9"></div>
<div class="b" style="left:1px;top:131px;width:52px;height:1px;background:#fff"></div>
<div class="t " style="left:10px;top:110px;">目录</div>
<div class="t " style="left:57px;top:112px;">文本库</div>
<div class="b" style="left:102px;top:107px;width:20px;height:20px;background:#f0f0f0;border:1px solid #adadad"></div>
<div class="b" style="left:122px;top:107px;width:20px;height:20px;background:#f0f0f0;border:1px solid #adadad"></div>
<svg style="position:absolute;left:108px;top:113px" width="8" height="8" viewBox="0 0 8 8"><path d="M5 1v6L2 4z" fill="#000"/></svg>
<svg style="position:absolute;left:128px;top:113px" width="8" height="8" viewBox="0 0 8 8"><path d="M3 1v6l3-3z" fill="#000"/></svg>
<div class="b" style="left:1px;top:133px;width:142px;height:25px;background:#e5e5e5;border:1px solid #adadad;border-left:none"></div>
<div class="t " style="left:6px;top:139px;">[E:] 文档</div>
<svg style="position:absolute;left:128px;top:140px" width="12" height="10" viewBox="0 0 12 10"><path d="M2 3.5l4 4l4-4" fill="none" stroke="#404040" stroke-width="1.1"/></svg>
<div class="b" style="left:1px;top:160px;width:142px;height:189px;background:#fff;border:1px solid #828790"></div>
<div class="b" style="left:3px;top:242px;width:138px;height:20px;background:#d9d9d9"></div>
<svg style="position:absolute;left:17px;top:164px" width="15" height="16" viewBox="0 0 15 16"><defs><linearGradient id="fg" x1="0" y1="0" x2="1" y2="1"><stop offset="0" stop-color="#fdf3b8"/><stop offset="1" stop-color="#f0da88"/></linearGradient></defs><path d="M11.5 6.5h2l1 1v7h-3z" fill="#f2dc90" stroke="#dcb860" stroke-width="0.9"/><rect x="12.3" y="9.5" width="1.2" height="4" fill="#3a90d8"/><path d="M0.5 0.5h10l1.5 1.5v13H0.5z" fill="url(#fg)" stroke="#dcb860" stroke-width="0.9"/></svg>
<div class="t" style="left:38px;top:165px;max-width:103px;overflow:hidden">E:\</div>
<svg style="position:absolute;left:22px;top:184px" width="15" height="16" viewBox="0 0 15 16"><defs><linearGradient id="fg" x1="0" y1="0" x2="1" y2="1"><stop offset="0" stop-color="#fdf3b8"/><stop offset="1" stop-color="#f0da88"/></linearGradient></defs><path d="M11.5 6.5h2l1 1v7h-3z" fill="#f2dc90" stroke="#dcb860" stroke-width="0.9"/><rect x="12.3" y="9.5" width="1.2" height="4" fill="#3a90d8"/><path d="M0.5 0.5h10l1.5 1.5v13H0.5z" fill="url(#fg)" stroke="#dcb860" stroke-width="0.9"/></svg>
<div class="t" style="left:43.7px;top:185px;max-width:97.3px;overflow:hidden">EditPlus v4.3.0</div>
<svg style="position:absolute;left:27px;top:204px" width="15" height="16" viewBox="0 0 15 16"><defs><linearGradient id="fg" x1="0" y1="0" x2="1" y2="1"><stop offset="0" stop-color="#fdf3b8"/><stop offset="1" stop-color="#f0da88"/></linearGradient></defs><path d="M11.5 6.5h2l1 1v7h-3z" fill="#f2dc90" stroke="#dcb860" stroke-width="0.9"/><rect x="12.3" y="9.5" width="1.2" height="4" fill="#3a90d8"/><path d="M0.5 0.5h10l1.5 1.5v13H0.5z" fill="url(#fg)" stroke="#dcb860" stroke-width="0.9"/></svg>
<div class="t" style="left:48.6px;top:205px;max-width:92.4px;overflow:hidden">EditPlus</div>
<svg style="position:absolute;left:32px;top:224px" width="15" height="16" viewBox="0 0 15 16"><defs><linearGradient id="fg" x1="0" y1="0" x2="1" y2="1"><stop offset="0" stop-color="#fdf3b8"/><stop offset="1" stop-color="#f0da88"/></linearGradient></defs><path d="M11.5 6.5h2l1 1v7h-3z" fill="#f2dc90" stroke="#dcb860" stroke-width="0.9"/><rect x="12.3" y="9.5" width="1.2" height="4" fill="#3a90d8"/><path d="M0.5 0.5h10l1.5 1.5v13H0.5z" fill="url(#fg)" stroke="#dcb860" stroke-width="0.9"/></svg>
<div class="t" style="left:53.3px;top:225px;max-width:87.7px;overflow:hidden">EditPlus_v4.3.0.239</div>
<svg style="position:absolute;left:38px;top:244px" width="15" height="16" viewBox="0 0 15 16"><path d="M5.5 0.5h5.5l1 1v12.5h-6.5z" fill="#f3de8e" stroke="#dcb860" stroke-width="0.9"/><path d="M11.5 6h1.5v8h-1.5z" fill="#f0d888" stroke="#dcb860" stroke-width="0.6"/><rect x="11.7" y="8" width="1" height="4.5" fill="#3a90d8"/><path d="M0.8 1.5q0-1 1-1h3.5q1 0 1 1v13q0 1-1 1h-3.5q-1 0-1-1z" fill="#fbeeb0" stroke="#dcb860" stroke-width="0.9"/><path d="M2.2 2v11" stroke="#fff" stroke-width="1" opacity="0.8"/></svg>
<div class="t" style="left:58.6px;top:245px;max-width:82.4px;overflow:hidden">EditPlus</div>
<div class="b" style="left:2px;top:332px;width:140px;height:16px;background:#f0f0f0"></div>
<div class="b" style="left:20px;top:332px;width:49px;height:15px;background:#cdcdcd"></div>
<svg style="position:absolute;left:5px;top:334px" width="12" height="12" viewBox="0 0 12 12"><path d="M7 2.5L3.5 6l3.5 3.5" fill="none" stroke="#606060" stroke-width="2"/></svg>
<svg style="position:absolute;left:126px;top:334px" width="12" height="12" viewBox="0 0 12 12"><path d="M5 2.5l3.5 3.5l-3.5 3.5" fill="none" stroke="#606060" stroke-width="2"/></svg>
<div class="b" style="left:1px;top:353px;width:142px;height:92px;background:#fff;border:1px solid #828790"></div>
<div class="t " style="left:5.6px;top:357px;">!导入激活密钥.reg</div>
<div class="t " style="left:5.6px;top:374px;">949.chm</div>
<div class="t " style="left:5.6px;top:391px;">ANSI.CTL</div>
<div class="t " style="left:5.6px;top:408px;">codepage.txt</div>
<div class="t " style="left:5.6px;top:425px;">CONTROL.CTL</div>
<div class="b" style="left:125px;top:354px;width:17px;height:90px;background:#f0f0f0"></div>
<div class="b" style="left:125px;top:372px;width:15px;height:17px;background:#cdcdcd"></div>
<svg style="position:absolute;left:127px;top:358px" width="12" height="12" viewBox="0 0 12 12"><path d="M2.5 7.5l3.5-3.5l3.5 3.5" fill="none" stroke="#606060" stroke-width="2"/></svg>
<svg style="position:absolute;left:127px;top:428px" width="12" height="12" viewBox="0 0 12 12"><path d="M2.5 4.5l3.5 3.5l3.5-3.5" fill="none" stroke="#606060" stroke-width="2"/></svg>
<div class="b" style="left:1px;top:447px;width:142px;height:24px;background:#e5e5e5;border:1px solid #adadad;border-left:none"></div>
<div class="t " style="left:4.7px;top:453px;">所有文件 (*.*)</div>
<svg style="position:absolute;left:128px;top:455px" width="12" height="10" viewBox="0 0 12 10"><path d="M2 3.5l4 4l4-4" fill="none" stroke="#404040" stroke-width="1.1"/></svg>
<div class="b" style="left:143px;top:103px;width:3px;height:367px;background:#f2f2f2"></div>
<div class="b" style="left:145px;top:103px;width:607px;height:367px;background:#fff"></div>
<div class="b" style="left:146px;top:104px;width:1px;height:366px;background:#8e8e8e"></div>
<div class="b" style="left:147px;top:103px;width:1px;height:367px;background:#6a6a6a"></div>
<div class="b" style="left:146px;top:103px;width:606px;height:1px;background:#6a6a6a"></div>
<div class="b" style="left:148px;top:104px;width:587px;height:14px;background:#f0f0f0"></div>
<div class="b" style="left:148px;top:118px;width:586px;height:1px;background:#000"></div>
<div class="b" style="left:188px;top:104px;width:1px;height:14px;background:#000080"></div>
<div class="b" style="left:202px;top:104px;width:7px;height:14px;background:#000080"></div>
<svg style="position:absolute;left:188px;top:104px" width="547" height="14" viewBox="0 0 547 14"><rect x="1" y="7" width="5" height="1" fill="#000080"/><rect x="8" y="7" width="5" height="1" fill="#000080"/><rect x="15" y="7" width="5" height="1" fill="#fff"/><rect x="22" y="7" width="5" height="1" fill="#000080"/><rect x="29" y="7" width="5" height="1" fill="#000080"/><rect x="31" y="4" width="1" height="6" fill="#000080"/><rect x="36" y="7" width="5" height="1" fill="#000080"/><rect x="43" y="7" width="5" height="1" fill="#000080"/><rect x="50" y="7" width="5" height="1" fill="#000080"/><rect x="57" y="7" width="5" height="1" fill="#000080"/><text x="66.5" y="11.3" text-anchor="middle" font-family="Liberation Mono" font-size="11.667" fill="#000080">1</text><rect x="71" y="7" width="5" height="1" fill="#000080"/><rect x="78" y="7" width="5" height="1" fill="#000080"/><rect x="85" y="7" width="5" height="1" fill="#000080"/><rect x="92" y="7" width="5" height="1" fill="#000080"/><rect x="99" y="7" width="5" height="1" fill="#000080"/><rect x="101" y="4" width="1" height="6" fill="#000080"/><rect x="106" y="7" width="5" height="1" fill="#000080"/><rect x="113" y="7" width="5" height="1" fill="#000080"/><rect x="120" y="7" width="5" height="1" fill="#000080"/><rect x="127" y="7" width="5" height="1" fill="#000080"/><text x="136.5" y="11.3" text-anchor="middle" font-family="Liberation Mono" font-size="11.667" fill="#000080">2</text><rect x="141" y="7" width="5" height="1" fill="#000080"/><rect x="148" y="7" width="5" height="1" fill="#000080"/><rect x="155" y="7" width="5" height="1" fill="#000080"/><rect x="162" y="7" width="5" height="1" fill="#000080"/><rect x="169" y="7" width="5" height="1" fill="#000080"/><rect x="171" y="4" width="1" height="6" fill="#000080"/><rect x="176" y="7" width="5" height="1" fill="#000080"/><rect x="183" y="7" width="5" height="1" fill="#000080"/><rect x="190" y="7" width="5" height="1" fill="#000080"/><rect x="197" y="7" width="5" height="1" fill="#000080"/><text x="206.5" y="11.3" text-anchor="middle" font-family="Liberation Mono" font-size="11.667" fill="#000080">3</text><rect x="211" y="7" width="5" height="1" fill="#000080"/><rect x="218" y="7" width="5" height="1" fill="#000080"/><rect x="225" y="7" width="5" height="1" fill="#000080"/><rect x="232" y="7" width="5" height="1" fill="#000080"/><rect x="239" y="7" width="5" height="1" fill="#000080"/><rect x="241" y="4" width="1" height="6" fill="#000080"/><rect x="246" y="7" width="5" height="1" fill="#000080"/><rect x="253" y="7" width="5" height="1" fill="#000080"/><rect x="260" y="7" width="5" height="1" fill="#000080"/><rect x="267" y="7" width="5" height="1" fill="#000080"/><text x="276.5" y="11.3" text-anchor="middle" font-family="Liberation Mono" font-size="11.667" fill="#000080">4</text><rect x="281" y="7" width="5" height="1" fill="#000080"/><rect x="288" y="7" width="5" height="1" fill="#000080"/><rect x="295" y="7" width="5" height="1" fill="#000080"/><rect x="302" y="7" width="5" height="1" fill="#000080"/><rect x="309" y="7" width="5" height="1" fill="#000080"/><rect x="311" y="4" width="1" height="6" fill="#000080"/><rect x="316" y="7" width="5" height="1" fill="#000080"/><rect x="323" y="7" width="5" height="1" fill="#000080"/><rect x="330" y="7" width="5" height="1" fill="#000080"/><rect x="337" y="7" width="5" height="1" fill="#000080"/><text x="346.5" y="11.3" text-anchor="middle" font-family="Liberation Mono" font-size="11.667" fill="#000080">5</text><rect x="351" y="7" width="5" height="1" fill="#000080"/><rect x="358" y="7" width="5" height="1" fill="#000080"/><rect x="365" y="7" width="5" height="1" fill="#000080"/><rect x="372" y="7" width="5" height="1" fill="#000080"/><rect x="379" y="7" width="5" height="1" fill="#000080"/><rect x="381" y="4" width="1" height="6" fill="#000080"/><rect x="386" y="7" width="5" height="1" fill="#000080"/><rect x="393" y="7" width="5" height="1" fill="#000080"/><rect x="400" y="7" width="5" height="1" fill="#000080"/><rect x="407" y="7" width="5" height="1" fill="#000080"/><text x="416.5" y="11.3" text-anchor="middle" font-family="Liberation Mono" font-size="11.667" fill="#000080">6</text><rect x="421" y="7" width="5" height="1" fill="#000080"/><rect x="428" y="7" width="5" height="1" fill="#000080"/><rect x="435" y="7" width="5" height="1" fill="#000080"/><rect x="442" y="7" width="5" height="1" fill="#000080"/><rect x="449" y="7" width="5" height="1" fill="#000080"/><rect x="451" y="4" width="1" height="6" fill="#000080"/><rect x="456" y="7" width="5" height="1" fill="#000080"/><rect x="463" y="7" width="5" height="1" fill="#000080"/><rect x="470" y="7" width="5" height="1" fill="#000080"/><rect x="477" y="7" width="5" height="1" fill="#000080"/><text x="486.5" y="11.3" text-anchor="middle" font-family="Liberation Mono" font-size="11.667" fill="#000080">7</text><rect x="491" y="7" width="5" height="1" fill="#000080"/><rect x="498" y="7" width="5" height="1" fill="#000080"/><rect x="505" y="7" width="5" height="1" fill="#000080"/><rect x="512" y="7" width="5" height="1" fill="#000080"/><rect x="519" y="7" width="5" height="1" fill="#000080"/><rect x="521" y="4" width="1" height="6" fill="#000080"/><rect x="526" y="7" width="5" height="1" fill="#000080"/><rect x="533" y="7" width="5" height="1" fill="#000080"/><rect x="540" y="7" width="5" height="1" fill="#000080"/><rect x="547" y="7" width="5" height="1" fill="#000080"/></svg>
<div class="b" style="left:735px;top:104px;width:17px;height:366px;background:#f0f0f0"></div>
<div class="b" style="left:735px;top:104px;width:16px;height:7px;background:#f0f0f0;border-top:1px solid #fff;border-left:1px solid #fff;border-right:1px solid #6a6a6a;border-bottom:1px solid #6a6a6a"></div>
<svg style="position:absolute;left:737px;top:114px" width="12" height="12" viewBox="0 0 12 12"><path d="M2.5 8l3.5-3.5l3.5 3.5" fill="none" stroke="#606060" stroke-width="2"/></svg>
<div class="b" style="left:735px;top:128px;width:15px;height:288px;background:#cdcdcd"></div>
<svg style="position:absolute;left:737px;top:455px" width="12" height="12" viewBox="0 0 12 12"><path d="M2.5 4l3.5 3.5l3.5-3.5" fill="none" stroke="#606060" stroke-width="2"/></svg>
<div class="ln" style="left:132px;top:121px">1</div>
<div class="code" style="left:188px;top:121px"><span class="tg">&lt;!doctype </span><span class="dt">html</span><span class="tg">&gt;</span></div>
<div class="ln" style="left:132px;top:135px">2</div>
<div class="code" style="left:188px;top:135px"><span class="tg">&lt;html </span><span class="at">lang</span><span class="tg">=</span><span class="av">"en"</span><span class="tg">&gt;</span></div>
<div class="ln" style="left:132px;top:149px">3</div>
<div class="code" style="left:188px;top:149px"><span class="tg"> &lt;head&gt;</span></div>
<div class="ln" style="left:132px;top:163px">4</div>
<div class="code" style="left:188px;top:163px"><span class="tg">  &lt;meta </span><span class="at">charset</span><span class="tg">=</span><span class="av">"UTF-8"</span><span class="tg">&gt;</span></div>
<div class="ln" style="left:132px;top:177px">5</div>
<div class="code" style="left:188px;top:177px"><span class="tg">  &lt;meta </span><span class="at">name</span><span class="tg">=</span><span class="av">"Generator"</span><span class="tg"> </span><span class="at">content</span><span class="tg">=</span><span class="av">"EditPlus<span style="display:inline-block;width:7px;font-size:9px;position:relative;top:-2px;letter-spacing:0;text-align:center;line-height:10px">®</span>"</span><span class="tg">&gt;</span></div>
<div class="ln" style="left:132px;top:191px">6</div>
<div class="code" style="left:188px;top:191px"><span class="tg">  &lt;meta </span><span class="at">name</span><span class="tg">=</span><span class="av">"Author"</span><span class="tg"> </span><span class="at">content</span><span class="tg">=</span><span class="av">""</span><span class="tg">&gt;</span></div>
<div class="ln" style="left:132px;top:205px">7</div>
<div class="code" style="left:188px;top:205px"><span class="tg">  &lt;meta </span><span class="at">name</span><span class="tg">=</span><span class="av">"Keywords"</span><span class="tg"> </span><span class="at">content</span><span class="tg">=</span><span class="av">""</span><span class="tg">&gt;</span></div>
<div class="ln" style="left:132px;top:219px">8</div>
<div class="code" style="left:188px;top:219px"><span class="tg">  &lt;meta </span><span class="at">name</span><span class="tg">=</span><span class="av">"Description"</span><span class="tg"> </span><span class="at">content</span><span class="tg">=</span><span class="av">""</span><span class="tg">&gt;</span></div>
<div class="ln" style="left:132px;top:233px">9</div>
<div class="code" style="left:188px;top:233px"><span class="tg">  &lt;title&gt;</span><span class="tx">Document</span><span class="tg">&lt;/title&gt;</span></div>
<div class="ln" style="left:132px;top:247px">10</div>
<div class="code" style="left:188px;top:247px"><span class="tg"> &lt;/head&gt;</span></div>
<div class="ln" style="left:132px;top:261px">11</div>
<div class="code" style="left:188px;top:261px"><span class="tg"> &lt;body&gt;</span></div>
<div class="ln" style="left:132px;top:275px">12</div>
<div class="code" style="left:188px;top:275px"><span class="tg"></span></div>
<div class="ln" style="left:132px;top:289px">13</div>
<div class="code" style="left:188px;top:289px"><span class="tg"> &lt;/body&gt;</span></div>
<div class="ln" style="left:132px;top:303px">14</div>
<div class="code" style="left:188px;top:303px"><span class="tg">&lt;/html&gt;</span></div>
<div class="ln" style="left:132px;top:317px">15</div>
<div class="code" style="left:188px;top:317px"><span class="tg"></span></div>
<div class="b" style="left:177px;top:137px;width:9px;height:9px;border:1px solid #a0a0a0;background:#fff"></div>
<div class="b" style="left:177px;top:141px;width:9px;height:1px;background:#a0a0a0"></div>
<div class="b" style="left:177px;top:151px;width:9px;height:9px;border:1px solid #a0a0a0;background:#fff"></div>
<div class="b" style="left:177px;top:155px;width:9px;height:1px;background:#a0a0a0"></div>
<svg style="position:absolute;left:149px;top:276px" width="8" height="11" viewBox="0 0 8 11"><path d="M1 0.5v10l5.5-5z" fill="#000080"/></svg>
<div class="b" style="left:1px;top:470px;width:751px;height:1px;background:#e3e3e3"></div>
<div class="b" style="left:1px;top:471px;width:751px;height:26px;background:#fff"></div>
<svg style="position:absolute;left:5px;top:474px" width="15" height="16" viewBox="0 0 15 16"><defs><linearGradient id="fg" x1="0" y1="0" x2="1" y2="1"><stop offset="0" stop-color="#fdf3b8"/><stop offset="1" stop-color="#f0da88"/></linearGradient></defs><path d="M11.5 6.5h2l1 1v7h-3z" fill="#f2dc90" stroke="#dcb860" stroke-width="0.9"/><rect x="12.3" y="9.5" width="1.2" height="4" fill="#3a90d8"/><path d="M0.5 0.5h10l1.5 1.5v13H0.5z" fill="url(#fg)" stroke="#dcb860" stroke-width="0.9"/></svg>
<div class="b" style="left:26px;top:472px;width:122px;height:23px;background:#cce8ff;border:1px solid #99d1ff"></div>
<svg style="position:absolute;left:31px;top:479px" width="12" height="10" viewBox="0 0 12 10"><path d="M7.5 1l3.5 3.8l-3.5 3.8" fill="none" stroke="#777" stroke-width="0.8" stroke-dasharray="1 0.8"/><path d="M4.5 1l3.8 3.8l-3.8 3.8l-3.8-3.8z" fill="#f05a22"/><path d="M0.7 4.8l3.8 3.8l3.8-3.8" fill="none" stroke="#2a1a1a" stroke-width="0.9"/></svg>
<div class="t " style="left:42.5px;top:476px;">新的文档<span style="letter-spacing:0.3px"> 1.html</span></div>
<svg style="position:absolute;left:135px;top:477px" width="11" height="11" viewBox="0 0 11 11"><path d="M2 2l7 7M9 2l-7 7" stroke="#c04848" stroke-width="2.8" stroke-linecap="round"/><path d="M2 2l7 7M9 2l-7 7" stroke="#f2c4c4" stroke-width="1.6" stroke-linecap="round"/><path d="M2.5 2.5l6 6M8.5 2.5l-6 6" stroke="#fff" stroke-width="0.7"/></svg>
<div class="b" style="left:1px;top:496px;width:751px;height:1px;background:#d7d7d7"></div>
<div class="b" style="left:1px;top:497px;width:751px;height:19px;background:#f0f0f0"></div>
<div class="t " style="left:3.2px;top:501px;">如需帮助，请按键盘 F1 键</div>
<div class="b" style="left:187px;top:501px;width:37px;height:13px;background:#06a52a"></div>
<div class="b" style="left:259px;top:499px;width:1px;height:17px;background:#d0d0d0"></div>
<div class="b" style="left:332px;top:499px;width:1px;height:17px;background:#d0d0d0"></div>
<div class="b" style="left:389px;top:499px;width:1px;height:17px;background:#d0d0d0"></div>
<div class="b" style="left:445px;top:499px;width:1px;height:17px;background:#d0d0d0"></div>
<div class="b" style="left:503px;top:499px;width:1px;height:17px;background:#d0d0d0"></div>
<div class="b" style="left:560px;top:499px;width:1px;height:17px;background:#d0d0d0"></div>
<div class="b" style="left:592px;top:499px;width:1px;height:17px;background:#d0d0d0"></div>
<div class="b" style="left:624px;top:499px;width:1px;height:17px;background:#d0d0d0"></div>
<div class="b" style="left:656px;top:499px;width:1px;height:17px;background:#d0d0d0"></div>
<div class="b" style="left:733px;top:499px;width:1px;height:17px;background:#d0d0d0"></div>
<div class="t " style="left:263.6px;top:501px;">列 3</div>
<div class="t " style="left:336.6px;top:501px;">15</div>
<div class="t " style="left:394.5px;top:501px;">00</div>
<div class="t " style="left:450.4px;top:501px;">PC</div>
<div class="t " style="left:508.5px;top:501px;">UTF-8</div>
<div class="t " style="left:725.3px;top:501px;">0</div>
<div class="b" style="left:750px;top:505px;width:2px;height:2px;background:#b8b8b8"></div>
<div class="b" style="left:750px;top:509px;width:2px;height:2px;background:#b8b8b8"></div>
<div class="b" style="left:746px;top:509px;width:2px;height:2px;background:#b8b8b8"></div>
<div class="b" style="left:750px;top:513px;width:2px;height:2px;background:#b8b8b8"></div>
<div class="b" style="left:746px;top:513px;width:2px;height:2px;background:#b8b8b8"></div>
<div class="b" style="left:742px;top:513px;width:2px;height:2px;background:#b8b8b8"></div>
</body></html>
